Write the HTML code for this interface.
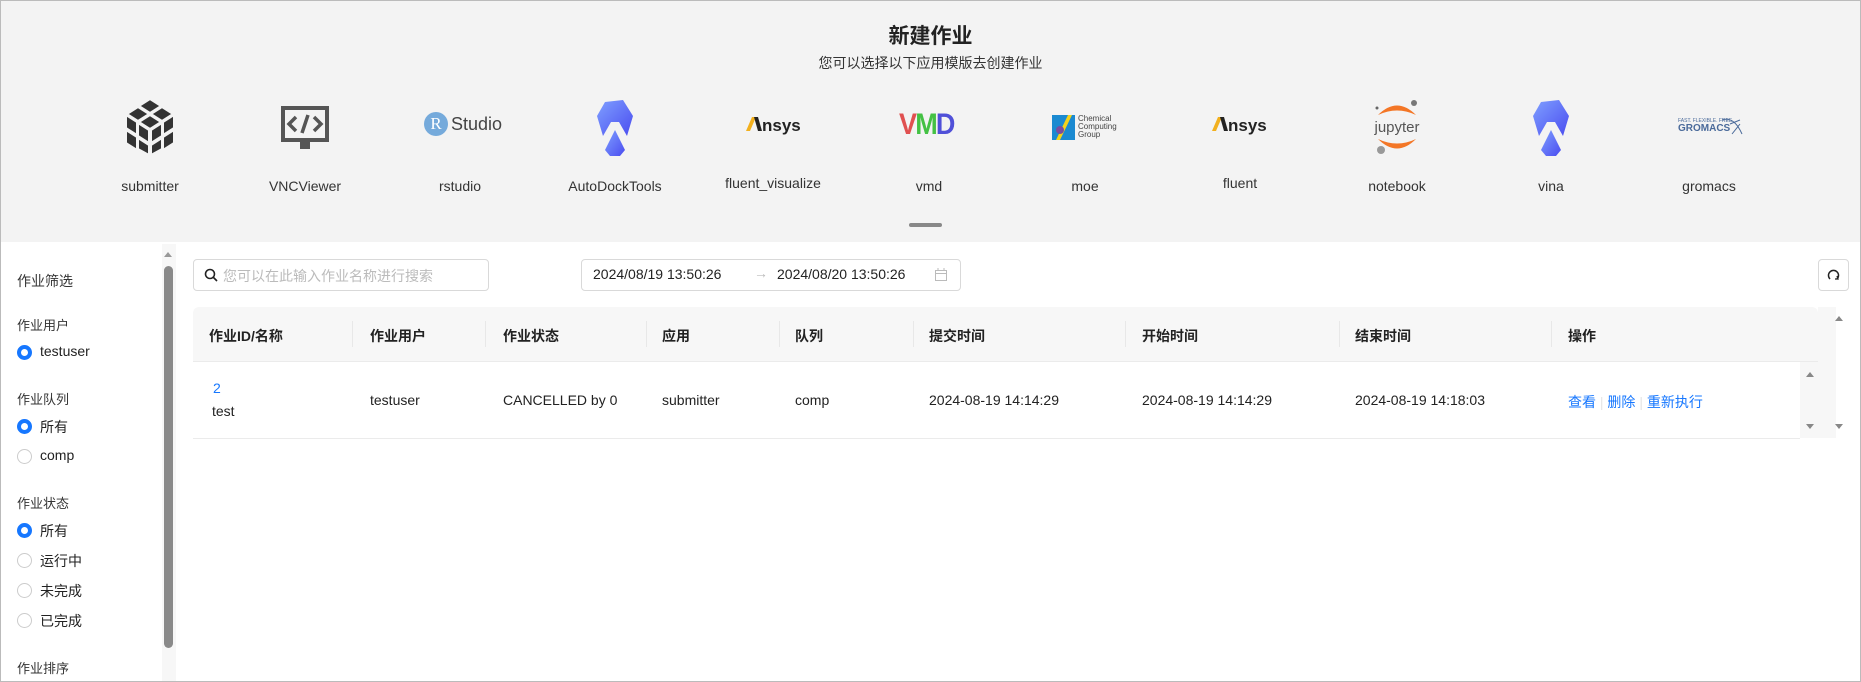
<!DOCTYPE html>
<html><head><meta charset="utf-8"><style>
*{margin:0;padding:0;box-sizing:border-box}
body{width:1861px;height:682px;overflow:hidden;background:#fff;font-family:"Liberation Sans","Noto Sans CJK SC",sans-serif;color:#222;position:relative}
.a{position:absolute}
.hdr{left:0;top:0;width:1861px;height:242px;background:#f3f3f3;border:1px solid #bbb;border-bottom:none}
.frame{left:0;top:0;width:1861px;height:682px;border:1px solid #bbb}
.lbl{font-size:14px;color:#333;width:160px;text-align:center;top:178px}
.side{font-size:13px;color:#333;left:17px}
.radio{left:17px;width:15px;height:15px;border-radius:50%;border:1px solid #ccc;background:#fff}
.radio.on{border:4px solid #1677ff}
.rt{left:40px;font-size:14px;color:#222}
.th{font-size:14px;font-weight:bold;color:#222;top:326px}
.td{font-size:14px;color:#222;top:392px}
.sep{width:1px;height:26px;background:#e8e8e8;top:321px}
</style></head><body>
<div class="a hdr"></div>
<div class="a" style="left:0;width:1861px;top:20px;text-align:center;font-size:21px;font-weight:bold;color:#222">新建作业</div>
<div class="a" style="left:0;width:1861px;top:53px;text-align:center;font-size:14px;color:#333">您可以选择以下应用模版去创建作业</div>

<svg class="a" style="left:124px;top:98px" width="52" height="58" viewBox="0 0 52 58"><g fill="#333" stroke="#f3f3f3" stroke-width="2"><path d="M26 1 L37 8 L26 15 L15 8Z"/><path d="M14 9 L25 16 L14 23 L3 16Z"/><path d="M38 9 L49 16 L38 23 L27 16Z"/><path d="M26 17 L37 24 L26 31 L15 24Z"/><path d="M2 17 L13 24 L13 37 L2 30Z"/><path d="M50 17 L39 24 L39 37 L50 30Z"/><path d="M14 25 L25 32 L25 45 L14 38Z"/><path d="M38 25 L27 32 L27 45 L38 38Z"/><path d="M2 32 L13 39 L13 52 L2 45Z"/><path d="M50 32 L39 39 L39 52 L50 45Z"/><path d="M14 40 L25 47 L25 57 L14 51Z"/><path d="M38 40 L27 47 L27 57 L38 51Z"/></g></svg>
<svg class="a" style="left:281px;top:106px" width="48" height="43" viewBox="0 0 48 43"><rect x="0" y="0" width="48" height="36" fill="#555"/><rect x="4" y="4" width="40" height="28" fill="#f3f3f3"/><rect x="19" y="36" width="10" height="7" fill="#555"/><path d="M15 11 L8 18 L15 25 M33 11 L40 18 L33 25 M27 9 L21 27" stroke="#555" stroke-width="3.5" fill="none"/></svg>
<div class="a" style="left:424px;top:112px;width:24px;height:24px;border-radius:50%;background:#75aadb;color:#fff;font-family:'Liberation Serif',serif;font-size:17px;text-align:center;line-height:24px">R</div>
<div class="a" style="left:451px;top:114px;font-size:18px;color:#444">Studio</div>
<svg class="a" style="left:595px;top:100px" width="40" height="57" viewBox="0 0 40 57"><defs><linearGradient id="g" x1="0" y1="0" x2="1" y2="1"><stop offset="0" stop-color="#7fa0ff"/><stop offset="1" stop-color="#4a4cf0"/></linearGradient></defs><path d="M10 2 L28 0 L38 16 L32 36 L24 22 L16 22 L8 36 L2 16Z" fill="url(#g)"/><path d="M20 30 L30 50 L25 56 L15 56 L10 50Z" fill="url(#g)"/></svg>
<svg class="a" style="left:745px;top:114px" width="56" height="22"><path d="M1 17 L7 3 L11 3 L5 17Z" fill="#f2b01e"/><path d="M9 3 L13 3 L17 17 L13 17Z" fill="#222"/><text x="17" y="17" font-size="17" font-weight="bold" fill="#222" font-family="Liberation Sans">nsys</text></svg>
<div class="a" style="left:899px;top:108px;font-size:30px;font-weight:bold;letter-spacing:-2px;transform:scaleX(0.9);transform-origin:left"><span style="color:#e05050">V</span><span style="color:#44c144">M</span><span style="color:#5050d8">D</span></div>
<div class="a" style="left:1052px;top:115px;width:23px;height:25px;background:#1b8ad1"></div>
<svg class="a" style="left:1052px;top:115px" width="23" height="25"><path d="M16 0 L20 0 L8 25 L4 25Z" fill="#f5d21a"/><circle cx="8" cy="15" r="4" fill="#7a4ca0"/></svg>
<div class="a" style="left:1078px;top:115px;font-size:8px;line-height:8px;color:#444">Chemical<br>Computing<br>Group</div>
<svg class="a" style="left:1211px;top:114px" width="56" height="22"><path d="M1 17 L7 3 L11 3 L5 17Z" fill="#f2b01e"/><path d="M9 3 L13 3 L17 17 L13 17Z" fill="#222"/><text x="17" y="17" font-size="17" font-weight="bold" fill="#222" font-family="Liberation Sans">nsys</text></svg>
<svg class="a" style="left:1372px;top:98px" width="50" height="58" viewBox="0 0 50 58"><path d="M6 17 Q25 -2 44 17 Q25 8 6 17Z" fill="#f37626"/><path d="M6 41 Q25 60 44 41 Q25 50 6 41Z" fill="#f37626"/><circle cx="42" cy="5" r="3" fill="#777"/><circle cx="9" cy="52" r="4" fill="#999"/><circle cx="5" cy="10" r="1.5" fill="#666"/><text x="25" y="34" font-size="15" text-anchor="middle" fill="#555" font-family="Liberation Sans">jupyter</text></svg>
<svg class="a" style="left:1531px;top:100px" width="40" height="57" viewBox="0 0 40 57"><path d="M10 2 L28 0 L38 16 L32 36 L24 22 L16 22 L8 36 L2 16Z" fill="url(#g)"/><path d="M20 30 L30 50 L25 56 L15 56 L10 50Z" fill="url(#g)"/></svg>
<div class="a" style="left:1678px;top:118px;font-size:5px;color:#4a6a9a">FAST. FLEXIBLE. FREE</div>
<div class="a" style="left:1678px;top:123px;font-size:10px;font-weight:bold;color:#4a6a9a">GROMACS</div>
<svg class="a" style="left:1722px;top:116px" width="22" height="20"><path d="M0 4 Q12 0 20 18 M8 8 L18 4 M10 18 L18 8" stroke="#4a6a9a" fill="none"/></svg>

<div class="a lbl" style="left:70px">submitter</div>
<div class="a lbl" style="left:225px">VNCViewer</div>
<div class="a lbl" style="left:380px">rstudio</div>
<div class="a lbl" style="left:535px">AutoDockTools</div>
<div class="a lbl" style="left:693px;top:175px">fluent_visualize</div>
<div class="a lbl" style="left:849px">vmd</div>
<div class="a lbl" style="left:1005px">moe</div>
<div class="a lbl" style="left:1160px;top:175px">fluent</div>
<div class="a lbl" style="left:1317px">notebook</div>
<div class="a lbl" style="left:1471px">vina</div>
<div class="a lbl" style="left:1629px">gromacs</div>
<div class="a" style="left:909px;top:223px;width:33px;height:4px;border-radius:2px;background:#888"></div>

<div class="a" style="left:162px;top:244px;width:14px;height:438px;background:#f7f7f7"></div>
<div class="a" style="left:164px;top:252px;width:0;height:0;border-left:4px solid transparent;border-right:4px solid transparent;border-bottom:5px solid #999"></div>
<div class="a" style="left:164px;top:266px;width:9px;height:382px;border-radius:5px;background:#8a8a8a"></div>
<div class="a side" style="top:271px;font-size:14px">作业筛选</div>
<div class="a side" style="top:315px">作业用户</div>
<div class="a radio on" style="top:345px"></div><div class="a rt" style="top:343px">testuser</div>
<div class="a side" style="top:389px">作业队列</div>
<div class="a radio on" style="top:419px"></div><div class="a rt" style="top:417px">所有</div>
<div class="a radio" style="top:449px"></div><div class="a rt" style="top:447px">comp</div>
<div class="a side" style="top:493px">作业状态</div>
<div class="a radio on" style="top:523px"></div><div class="a rt" style="top:521px">所有</div>
<div class="a radio" style="top:553px"></div><div class="a rt" style="top:551px">运行中</div>
<div class="a radio" style="top:583px"></div><div class="a rt" style="top:581px">未完成</div>
<div class="a radio" style="top:613px"></div><div class="a rt" style="top:611px">已完成</div>
<div class="a side" style="top:658px">作业排序</div>

<div class="a" style="left:193px;top:259px;width:296px;height:32px;border:1px solid #d9d9d9;border-radius:4px"></div>
<svg class="a" style="left:204px;top:268px" width="14" height="14"><circle cx="6" cy="6" r="4.5" stroke="#222" stroke-width="1.6" fill="none"/><path d="M9.5 9.5 L13 13" stroke="#222" stroke-width="1.6"/></svg>
<div class="a" style="left:223px;top:266px;font-size:14px;color:#bbb">您可以在此输入作业名称进行搜索</div>
<div class="a" style="left:581px;top:259px;width:380px;height:32px;border:1px solid #d9d9d9;border-radius:4px"></div>
<div class="a" style="left:593px;top:266px;font-size:14px;color:#222">2024/08/19 13:50:26</div>
<div class="a" style="left:754px;top:265px;font-size:14px;color:#bbb">→</div>
<div class="a" style="left:777px;top:266px;font-size:14px;color:#222">2024/08/20 13:50:26</div>
<svg class="a" style="left:935px;top:268px" width="12" height="13"><rect x="0.5" y="2.5" width="11" height="10" fill="none" stroke="#bbb"/><path d="M0 5.5 H12 M3 0 V3 M9 0 V3" stroke="#bbb"/></svg>
<div class="a" style="left:1818px;top:259px;width:31px;height:32px;border:1px solid #d9d9d9;border-radius:4px"></div>
<svg class="a" style="left:1826px;top:267px" width="15" height="15"><path d="M4 12 A5 5 0 1 1 11 12" stroke="#222" stroke-width="1.5" fill="none"/><path d="M9 12 L12 12 L11 9" stroke="#222" stroke-width="1.3" fill="none"/></svg>

<div class="a" style="left:193px;top:307px;width:1625px;height:55px;background:#f7f7f7;border-bottom:1px solid #ebebeb;border-radius:6px 6px 0 0"></div>
<div class="a sep" style="left:352px"></div><div class="a sep" style="left:485px"></div><div class="a sep" style="left:646px"></div><div class="a sep" style="left:779px"></div><div class="a sep" style="left:913px"></div><div class="a sep" style="left:1125px"></div><div class="a sep" style="left:1339px"></div><div class="a sep" style="left:1551px"></div>
<div class="a th" style="left:209px">作业ID/名称</div>
<div class="a th" style="left:370px">作业用户</div>
<div class="a th" style="left:503px">作业状态</div>
<div class="a th" style="left:662px">应用</div>
<div class="a th" style="left:795px">队列</div>
<div class="a th" style="left:929px">提交时间</div>
<div class="a th" style="left:1142px">开始时间</div>
<div class="a th" style="left:1355px">结束时间</div>
<div class="a th" style="left:1568px">操作</div>
<div class="a" style="left:193px;top:438px;width:1607px;height:1px;background:#ebebeb"></div>
<div class="a" style="left:213px;top:380px;font-size:14px;color:#1677ff">2</div>
<div class="a" style="left:212px;top:403px;font-size:14px">test</div>
<div class="a td" style="left:370px">testuser</div>
<div class="a td" style="left:503px">CANCELLED by 0</div>
<div class="a td" style="left:662px">submitter</div>
<div class="a td" style="left:795px">comp</div>
<div class="a td" style="left:929px">2024-08-19 14:14:29</div>
<div class="a td" style="left:1142px">2024-08-19 14:14:29</div>
<div class="a td" style="left:1355px">2024-08-19 14:18:03</div>
<div class="a td" style="left:1568px;color:#1677ff">查看 <span style="color:#e5e5e5">|</span> 删除 <span style="color:#e5e5e5">|</span> 重新执行</div>
<div class="a" style="left:1800px;top:362px;width:18px;height:76px;background:#f7f7f7"></div>
<div class="a" style="left:1818px;top:307px;width:18px;height:131px;background:#f7f7f7"></div>
<div class="a" style="left:1835px;top:316px;border-left:4px solid transparent;border-right:4px solid transparent;border-bottom:5px solid #888"></div>
<div class="a" style="left:1806px;top:372px;border-left:4px solid transparent;border-right:4px solid transparent;border-bottom:5px solid #888"></div>
<div class="a" style="left:1806px;top:424px;border-left:4px solid transparent;border-right:4px solid transparent;border-top:5px solid #888"></div>
<div class="a" style="left:1835px;top:424px;border-left:4px solid transparent;border-right:4px solid transparent;border-top:5px solid #888"></div>
<div class="a frame"></div>
</body></html>
